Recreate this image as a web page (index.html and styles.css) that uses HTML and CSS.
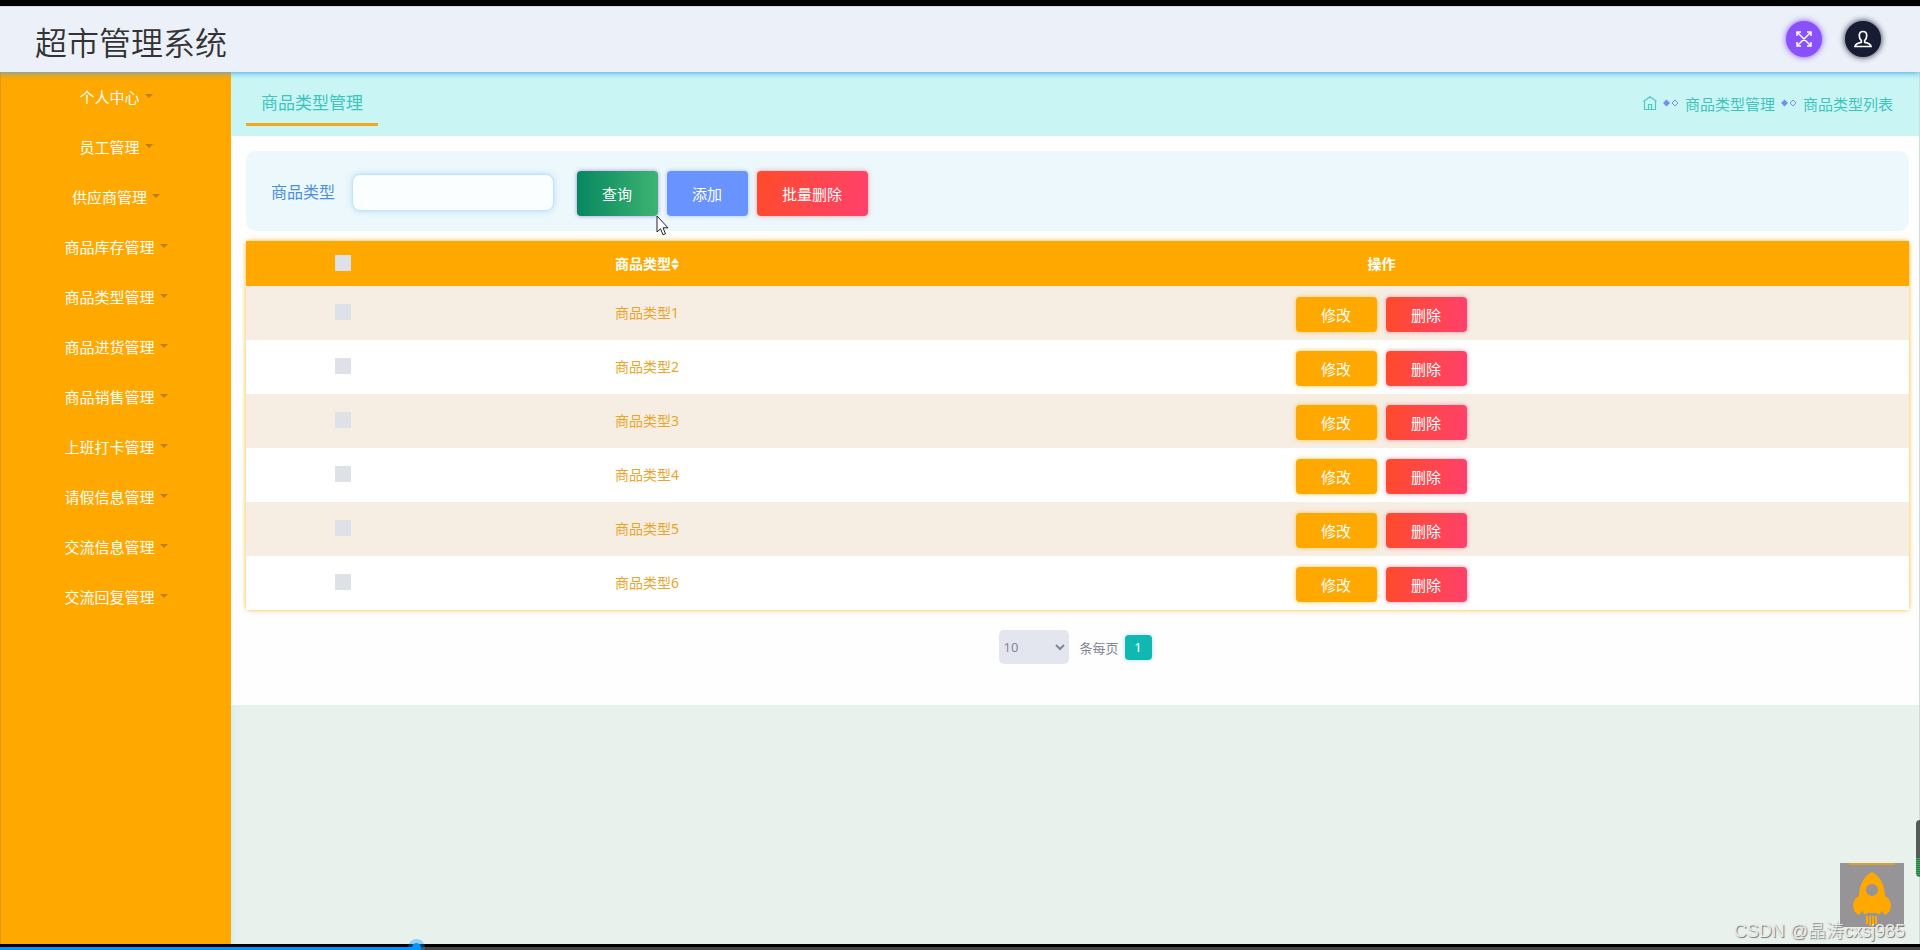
FILE: index.html
```html
<!DOCTYPE html>
<html lang="zh-CN">
<head>
<meta charset="utf-8">
<title>超市管理系统</title>
<link rel="stylesheet" href="styles.css">
</head>
<body>
<div class="screen">
  <header class="topbar">
    <h1 class="brand">超市管理系统</h1>
    <div class="actions">
      <button class="round round-purple" type="button" aria-label="全屏">
        <svg width="18" height="18" viewBox="0 0 18 18" fill="none" stroke="#fff" stroke-width="1.5"><path d="M2 2l14 14M16 2L2 16M2 6V2h4M12 2h4v4M16 12v4h-4M6 16H2v-4"/></svg>
      </button>
      <button class="round round-dark" type="button" aria-label="用户">
        <svg width="20" height="20" viewBox="0 0 20 20" fill="none" stroke="#fff" stroke-width="1.700"><path d="M8.300 11.500C6.800 10.500 6.300 8.500 6.300 6.500C6.300 3.800 7.600 2.500 10 2.500s3.700 1.300 3.700 4c0 2-.5 4-2 5v1.800c3.500.5 5.800 1.700 6.300 4.200H2c.5-2.500 2.800-3.700 6.300-4.200z"/></svg>
      </button>
    </div>
  </header>
  <div class="body">
    <nav class="sidebar">
      <a href="#">个人中心</a>
      <a href="#">员工管理</a>
      <a href="#">供应商管理</a>
      <a href="#">商品库存管理</a>
      <a href="#">商品类型管理</a>
      <a href="#">商品进货管理</a>
      <a href="#">商品销售管理</a>
      <a href="#">上班打卡管理</a>
      <a href="#">请假信息管理</a>
      <a href="#">交流信息管理</a>
      <a href="#">交流回复管理</a>
    </nav>
    <main class="content">
      <div class="pagehead">
        <h2 class="tab">商品类型管理</h2>
        <div class="crumbs">
          <a href="#" aria-label="首页"><svg width="14" height="14" viewBox="0 0 14 14" fill="none" stroke="#4fc9c2" stroke-width="1.200"><path d="M.5 5.500L7 .7l6.500 4.800M1.500 5v8.500h11V5M5.500 13V8.500h3V13"/></svg></a>
          <svg width="16" height="8" viewBox="0 0 16 8"><path d="M3.500 .5L7 4l-3.500 3.500L0 4z" fill="#6f8ff5"/><path d="M12 1l3 3-3 3-3-3z" fill="none" stroke="#6f8ff5"/></svg>
          <a href="#">商品类型管理</a>
          <svg width="16" height="8" viewBox="0 0 16 8"><path d="M3.500 .5L7 4l-3.500 3.500L0 4z" fill="#6f8ff5"/><path d="M12 1l3 3-3 3-3-3z" fill="none" stroke="#6f8ff5"/></svg>
          <a href="#">商品类型列表</a>
        </div>
      </div>
      <section class="panel">
        <form class="search">
          <label for="kind">商品类型</label>
          <input id="kind" type="text">
          <div class="buttons">
            <button class="btn btn-green" type="button">查询</button>
            <button class="btn btn-blue" type="button">添加</button>
            <button class="btn btn-red" type="button">批量删除</button>
          </div>
        </form>
        <table class="grid">
          <thead>
            <tr><th class="c-check"><input type="checkbox" aria-label="全选"></th><th class="c-name">商品类型<svg width="8" height="12" viewBox="0 0 8 12" fill="#fff"><path d="M4 0l4 5.300H0zM4 12l4-5.300H0z"/></svg></th><th>操作</th></tr>
          </thead>
          <tbody>
            <tr><td><input type="checkbox" aria-label="选择1"></td><td>商品类型1</td><td><div class="ops"><button class="btn btn-orange" type="button">修改</button><button class="btn btn-red" type="button">删除</button></div></td></tr>
            <tr><td><input type="checkbox" aria-label="选择2"></td><td>商品类型2</td><td><div class="ops"><button class="btn btn-orange" type="button">修改</button><button class="btn btn-red" type="button">删除</button></div></td></tr>
            <tr><td><input type="checkbox" aria-label="选择3"></td><td>商品类型3</td><td><div class="ops"><button class="btn btn-orange" type="button">修改</button><button class="btn btn-red" type="button">删除</button></div></td></tr>
            <tr><td><input type="checkbox" aria-label="选择4"></td><td>商品类型4</td><td><div class="ops"><button class="btn btn-orange" type="button">修改</button><button class="btn btn-red" type="button">删除</button></div></td></tr>
            <tr><td><input type="checkbox" aria-label="选择5"></td><td>商品类型5</td><td><div class="ops"><button class="btn btn-orange" type="button">修改</button><button class="btn btn-red" type="button">删除</button></div></td></tr>
            <tr><td><input type="checkbox" aria-label="选择6"></td><td>商品类型6</td><td><div class="ops"><button class="btn btn-orange" type="button">修改</button><button class="btn btn-red" type="button">删除</button></div></td></tr>
          </tbody>
        </table>
        <div class="pager">
          <span class="selectbox">
            <select id="size"><option>10</option></select>
            <svg width="10" height="7" viewBox="0 0 10 7" fill="none" stroke="#85859a" stroke-width="2"><path d="M1 1l4 4 4-4"/></svg>
          </span>
          <label for="size">条每页</label>
          <button class="page" type="button">1</button>
        </div>
      </section>
    </main>
  </div>
  <footer class="player"><div class="played"><span class="thumb"></span></div></footer>
  <span class="gadget"></span>
  <button class="rocket" type="button" aria-label="返回顶部">
    <svg width="64" height="64" viewBox="0 0 64 64"><path d="M9 0h46v2H9z" fill="#d9a030"/><path fill="#ffa800" fill-rule="evenodd" d="M32 9c8 4 13 13 13 24c4 2 6 6 6 10c0 4-2 7-6 9l-3-4-3 4-2-2H27l-2 2-3-4-3 4c-4-2-6-5-6-9c0-4 2-8 6-10C19 22 24 13 32 9zM32 21a6 6 0 100 12a6 6 0 100-12z"/><path fill="#ffa800" d="M26 53h2v8h-2zM29 53h2v10h-2zM32 53h2v11h-2zM35 53h2v8h-2z"/></svg>
  </button>
  <span class="watermark">CSDN @晶涛cxsj985</span>
  <svg class="cursor" width="13" height="21" viewBox="0 0 13 21"><path d="M1 1v16l3.500-3.200 2.500 6 2.500-1-2.500-6H12z" fill="#fff" stroke="#222"/></svg>
</div>
</body>
</html>
```
FILE: styles.css
```css
* { box-sizing: border-box; }
body {
  margin: 0;
  font-family: "Noto Sans", "Noto Sans CJK SC", sans-serif;
  font-size: 14px;
  background: #e8f1ec;
}
a { color: inherit; text-decoration: none; }
button, input, select { font-family: inherit; margin: 0; border: 0; padding: 0; }
svg { display: block; }
.screen {
  position: relative;
  display: flex;
  flex-direction: column;
  min-height: 100vh;
  border-top: 6px solid #000;
  overflow: hidden;
}
.topbar {
  position: relative;
  z-index: 1;
  display: flex;
  align-items: center;
  justify-content: space-between;
  height: 66px;
  padding: 0 39px 0 35px;
  background: #ecf0f9;
  border-top: 1px solid #d5d8e0;
  box-shadow: 0 1px 6px #4aa8e8;
}
.brand { margin: 0; padding-top: 2px; font-family: "Noto Sans CJK SC", sans-serif; font-size: 32px; font-weight: 350; line-height: 48px; color: #333; }
.actions { display: flex; gap: 23px; padding-bottom: 2px; }
.round {
  display: flex;
  align-items: center;
  justify-content: center;
  width: 36px;
  height: 36px;
  border-radius: 50%;
}
.round-purple { background: #8950fc; box-shadow: 0 0 6px #8950fc; }
.round-dark { background: #181c32; box-shadow: 0 0 6px #181c32; }
.body { display: flex; flex: 1; }
.sidebar {
  flex: none;
  display: flex;
  flex-direction: column;
  width: 231px;
  background: #ffa800;
  border-left: 1px solid #e09a10;
  box-shadow: 0 0 8px #bfe6fb;
}
.sidebar a {
  display: flex;
  align-items: center;
  justify-content: center;
  gap: 5px;
  height: 50px;
  padding-bottom: 2px;
  font-size: 15px;
  color: #fff;
}
.sidebar a::after {
  content: "";
  border: 4px solid transparent;
  border-top-color: #b88114;
  border-bottom: 0;
}
.content { flex: 1; border-right: 1px solid #cfdcd8; }
.pagehead {
  display: flex;
  justify-content: space-between;
  height: 64px;
  padding: 0 26px 0 15px;
  background: #c9f6f5;
}
.tab {
  height: 54px;
  margin: 0;
  padding: 6px 15px 0;
  border-bottom: 3px solid #f3a61c;
  font-size: 17px;
  font-weight: 400;
  line-height: 50px;
  color: #3fc4bd;
}
.crumbs { display: flex; align-items: center; gap: 6px; padding-bottom: 2px; font-size: 15px; color: #3fc4bd; }
.panel { padding: 15px 10px 41px 15px; background: #fefefe; }
.search {
  display: flex;
  align-items: center;
  height: 80px;
  padding: 2px 25px 0;
  border-radius: 10px;
  background: #ecf8fb;
}
.search label { margin-right: 17px; padding-bottom: 2px; font-size: 16px; color: #4a90e2; }
.search input {
  width: 202px;
  height: 37px;
  padding: 0 10px;
  border: 1px solid #c0e2fb;
  border-radius: 8px;
  background: #fbfeff;
  box-shadow: 0 0 6px #b5dcfa;
}
.buttons { display: flex; gap: 9px; margin-left: 23px; padding-top: 2px; }
.btn {
  height: 35px;
  padding: 0 26px 0 25px;
  border-radius: 4px;
  font-size: 15px;
  color: #fff;
}
.search .btn { height: 45px; }
.btn-green { background: linear-gradient(90deg, #078860, #3cb371); box-shadow: 0 0 4px #a78bea; }
.btn-blue { background: #6993ff; box-shadow: 0 0 4px #a9bdfb; }
.btn-red { background: linear-gradient(100deg, #ff4b2b, #ff416c); box-shadow: 0 0 5px #ff9aac; }
.btn-orange { background: #ffa800; box-shadow: 0 0 5px #ffc65a; }
.grid {
  width: 100%;
  margin-top: 10px;
  border-collapse: collapse;
  table-layout: fixed;
  border-radius: 4px;
  box-shadow: 0 0 5px #ffb52e;
  text-align: center;
  color: #eda42c;
}
.grid th { height: 45px; padding: 0 0 2px; background: #ffa800; color: #fff; font-weight: 700; }
.grid th svg { display: inline-block; vertical-align: -1px; }
.grid td { height: 54px; padding: 0 0 2px; }
.grid td:last-child { padding: 2px 0 0; }
.grid tbody tr { background: #fff; }
.grid tbody tr:nth-child(odd) { background: #f6eee3; }
.c-check { width: 11.67%; }
.c-name { width: 24.9%; }
.grid input { display: block; appearance: none; width: 16px; height: 16px; margin: 0 auto; background: #dee1e8; }
.ops { display: flex; justify-content: center; gap: 9px; }
.pager {
  display: flex;
  align-items: center;
  justify-content: center;
  margin-top: 20px;
  padding-right: 4px;
  font-size: 13px;
  color: #85859a;
}
.selectbox { position: relative; margin-right: 10px; }
.selectbox svg { position: absolute; right: 4px; top: 14px; pointer-events: none; }
.selectbox select {
  display: block;
  appearance: none;
  width: 70px;
  height: 34px;
  padding: 0 4px;
  border-radius: 5px;
  background: #e4e6ef;
  font-size: 13px;
  color: #85859a;
}
.page {
  width: 27px;
  height: 25px;
  margin-left: 6px;
  border-radius: 4px;
  background: #0fb8b0;
  box-shadow: 0 0 5px #b8dcfa;
  font-size: 13px;
  color: #fff;
}
.player { position: relative; height: 6px; padding-top: 3px; background: linear-gradient(#000 3px, #444 3px); }
.played { position: relative; width: 21.7%; height: 3px; background: #0096ff; }
.thumb {
  position: absolute;
  right: -8px;
  top: -8px;
  width: 17px;
  height: 17px;
  border: 4px solid rgba(0, 150, 255, 0.35);
  border-radius: 50%;
  background: #0096ff;
  background-clip: padding-box;
}
.gadget {
  position: absolute;
  right: 0;
  top: 814px;
  width: 4px;
  height: 57px;
  border-radius: 4px 0 0 4px;
  background: linear-gradient(#555b59 38px, transparent 38px), repeating-linear-gradient(#3aa856 0 1px, #2f7a48 1px 2px);
}
.rocket { position: absolute; right: 16px; bottom: 23px; width: 64px; height: 64px; background: #969497; }
.watermark {
  position: absolute;
  right: 15px;
  bottom: 6px;
  font-family: "Liberation Sans", "Noto Sans CJK SC", sans-serif;
  font-size: 18px;
  font-weight: 300;
  line-height: 26px;
  color: #e9ecea;
  text-shadow: 1px 1px 1px #777;
}
.cursor { position: absolute; left: 656px; top: 209px; }
```
